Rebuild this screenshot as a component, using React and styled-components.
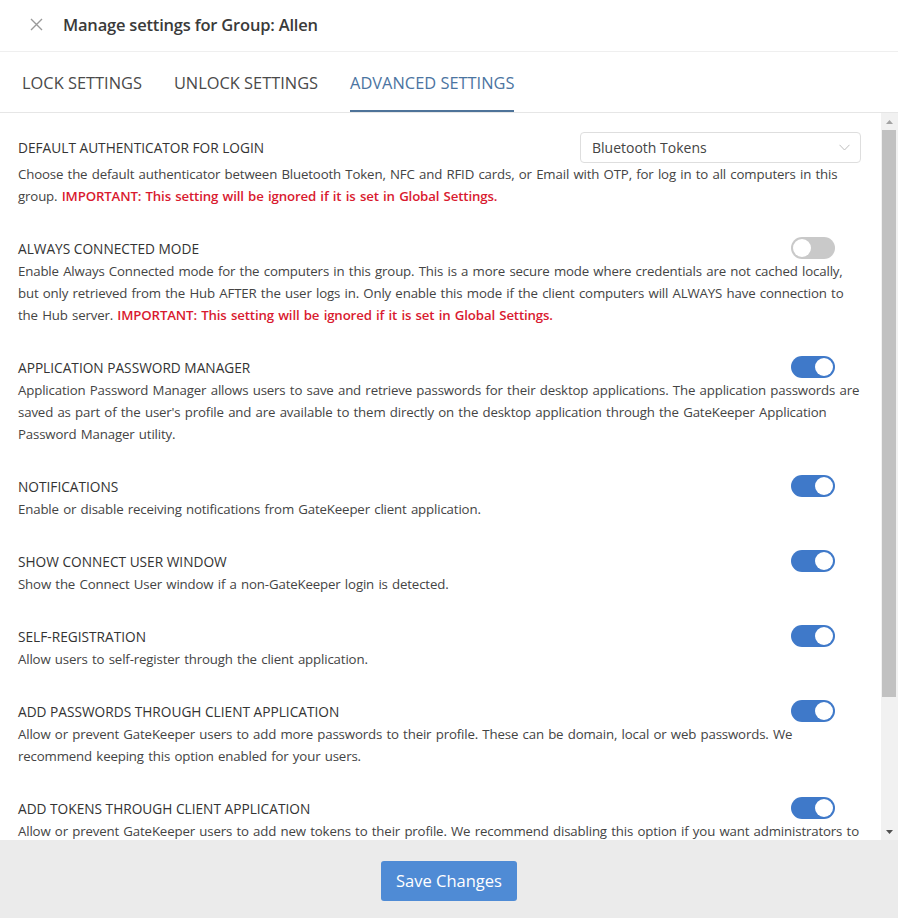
import styled, { createGlobalStyle } from "styled-components";

const GlobalStyle = createGlobalStyle`
  html, body {
    margin: 0;
    padding: 0;
    height: 100%;
  }

  body {
    font-family: "Open Sans", "Noto Sans", sans-serif;
    color: #333;
    background: #fff;
  }

  #root {
    height: 100%;
  }
`;

const Panel = styled.div`
  display: flex;
  flex-direction: column;

  height: 100vh;
  width: 100%;

  background-color: #fff;
`;

const Header = styled.div`
  display: flex;
  flex-direction: row;

  height: 52px;
  flex-shrink: 0;

  align-items: center;

  gap: 20px;
  padding: 0 0 2px 30px;
  box-sizing: border-box;

  border-bottom: 1px solid #efefef;
`;

const CloseButton = styled.button`
  display: flex;

  width: 13px;
  height: 13px;

  padding: 0;

  border: none;
  background: transparent;

  cursor: pointer;
`;

const Title = styled.div`
  font-size: 16.5px;
  font-weight: 600;
  letter-spacing: -0.2px;

  color: #3a3a3a;
`;

const Tabs = styled.div`
  display: flex;
  flex-direction: row;

  height: 60px;
  flex-shrink: 0;

  gap: 32px;
  padding: 0 0 0 22px;

  border-bottom: 1px solid #e6e6e6;
`;

const Tab = styled.div`
  display: flex;

  align-items: center;

  font-size: 16.4px;

  color: ${(p) => (p.$active ? "#4b74a1" : "#4a4a4a")};
  border-bottom: 2px solid ${(p) => (p.$active ? "#4e7399" : "transparent")};
  padding-top: 2px;

  cursor: pointer;
`;

const Body = styled.div`
  display: flex;
  flex-direction: row;

  flex: 1;
  min-height: 0;
`;

const Content = styled.div`
  flex: 1;

  overflow: hidden;
`;

const ScrollTrack = styled.div`
  display: flex;
  flex-direction: column;

  width: 17px;
  flex-shrink: 0;

  background-color: #f1f1f1;
`;

const ScrollArrow = styled.div`
  display: flex;

  height: 17px;
  flex-shrink: 0;

  align-items: center;
  justify-content: center;
`;

const ScrollThumb = styled.div`
  height: 567px;

  margin: 0 2px 0 1px;

  background-color: #c1c1c1;
`;

const ScrollRest = styled.div`
  flex: 1;
`;

const List = styled.div`
  display: flex;
  flex-direction: column;

  gap: 29px;
  padding: 19px 20px 0 18px;
`;

const Setting = styled.div`
  display: flex;
  flex-direction: column;
`;

const SettingHead = styled.div`
  display: flex;
  flex-direction: row;

  min-height: 24px;

  align-items: center;
  justify-content: space-between;
`;

const SettingName = styled.div`
  font-size: 13.7px;

  color: #333;
`;

const Description = styled.div`
  font-size: 13.25px;
  line-height: 22px;
  letter-spacing: -0.15px;
  word-spacing: 1px;

  color: #444;
`;

const Important = styled.span`
  font-weight: 600;

  color: #d91a2f;
`;

const Select = styled.div`
  display: flex;
  flex-direction: row;

  width: 281px;
  height: 31px;

  box-sizing: border-box;

  align-items: center;
  justify-content: space-between;

  padding: 0 10px 0 11px;

  border: 1px solid #dedede;
  border-radius: 4px;

  font-size: 14px;

  color: #444;
`;

const Switch = styled.div`
  position: relative;

  width: 44px;
  height: 22px;

  margin-right: 26px;

  border-radius: 11px;

  background-color: ${(p) => (p.$on ? "#3f79c9" : "#c9c9c9")};

  &::after {
    content: "";

    position: absolute;
    top: 2px;
    left: ${(p) => (p.$on ? "24px" : "2px")};

    width: 18px;
    height: 18px;

    border-radius: 50%;

    background-color: #fff;
  }
`;

const Footer = styled.div`
  display: flex;

  height: 78px;
  flex-shrink: 0;

  align-items: center;
  justify-content: center;

  padding-top: 3px;
  box-sizing: border-box;

  background-color: #ebebeb;
`;

const SaveButton = styled.button`
  width: 136px;
  height: 40px;

  border: none;
  border-radius: 3px;

  font-family: inherit;
  font-size: 16.5px;

  color: #fff;
  background-color: #4f8bd5;

  cursor: pointer;
`;

const IMPORTANT = "IMPORTANT: This setting will be ignored if it is set in Global Settings.";

const settings = [
  {
    name: "ALWAYS CONNECTED MODE",
    on: false,
    text: "Enable Always Connected mode for the computers in this group. This is a more secure mode where credentials are not cached locally, but only retrieved from the Hub AFTER the user logs in. Only enable this mode if the client computers will ALWAYS have connection to the Hub server.",
    important: true,
  },
  {
    name: "APPLICATION PASSWORD MANAGER",
    on: true,
    text: "Application Password Manager allows users to save and retrieve passwords for their desktop applications. The application passwords are saved as part of the user's profile and are available to them directly on the desktop application through the GateKeeper Application Password Manager utility.",
  },
  {
    name: "NOTIFICATIONS",
    on: true,
    text: "Enable or disable receiving notifications from GateKeeper client application.",
  },
  {
    name: "SHOW CONNECT USER WINDOW",
    on: true,
    text: "Show the Connect User window if a non-GateKeeper login is detected.",
  },
  {
    name: "SELF-REGISTRATION",
    on: true,
    text: "Allow users to self-register through the client application.",
  },
  {
    name: "ADD PASSWORDS THROUGH CLIENT APPLICATION",
    on: true,
    text: "Allow or prevent GateKeeper users to add more passwords to their profile. These can be domain, local or web passwords. We recommend keeping this option enabled for your users.",
  },
  {
    name: "ADD TOKENS THROUGH CLIENT APPLICATION",
    on: true,
    text: "Allow or prevent GateKeeper users to add new tokens to their profile. We recommend disabling this option if you want administrators to control which tokens are assigned to users.",
  },
];

function App() {
  return (
    <Panel>
      <GlobalStyle />
      <Header>
        <CloseButton aria-label="Close">
          <svg width="13" height="13" viewBox="0 0 13 13">
            <path d="M1 1L12 12M12 1L1 12" stroke="#9a9a9a" strokeWidth="1.4" />
          </svg>
        </CloseButton>
        <Title>Manage settings for Group: Allen</Title>
      </Header>
      <Tabs>
        <Tab>LOCK SETTINGS</Tab>
        <Tab>UNLOCK SETTINGS</Tab>
        <Tab $active>ADVANCED SETTINGS</Tab>
      </Tabs>
      <Body>
        <Content>
          <List>
            <Setting>
              <SettingHead>
                <SettingName>DEFAULT AUTHENTICATOR FOR LOGIN</SettingName>
                <Select>
                  Bluetooth Tokens
                  <svg width="11" height="7" viewBox="0 0 11 7">
                    <path d="M0.5 0.8L5.5 6L10.5 0.8" fill="none" stroke="#bdbdbd" strokeWidth="1" />
                  </svg>
                </Select>
              </SettingHead>
              <Description>
                Choose the default authenticator between Bluetooth Token, NFC and RFID cards, or Email
                with OTP, for log in to all computers in this group. <Important>{IMPORTANT}</Important>
              </Description>
            </Setting>
            {settings.map((s) => (
              <Setting key={s.name}>
                <SettingHead>
                  <SettingName>{s.name}</SettingName>
                  <Switch $on={s.on} />
                </SettingHead>
                <Description>
                  {s.text}
                  {s.important && (
                    <>
                      {" "}
                      <Important>{IMPORTANT}</Important>
                    </>
                  )}
                </Description>
              </Setting>
            ))}
          </List>
        </Content>
        <ScrollTrack>
          <ScrollArrow>
            <svg width="7" height="4" viewBox="0 0 7 4">
              <polygon points="3.5,0 7,4 0,4" fill="#a3a3a3" />
            </svg>
          </ScrollArrow>
          <ScrollThumb />
          <ScrollRest />
          <ScrollArrow>
            <svg width="7" height="4" viewBox="0 0 7 4">
              <polygon points="0,0 7,0 3.5,4" fill="#505050" />
            </svg>
          </ScrollArrow>
        </ScrollTrack>
      </Body>
      <Footer>
        <SaveButton>Save Changes</SaveButton>
      </Footer>
    </Panel>
  );
}

export default App;
